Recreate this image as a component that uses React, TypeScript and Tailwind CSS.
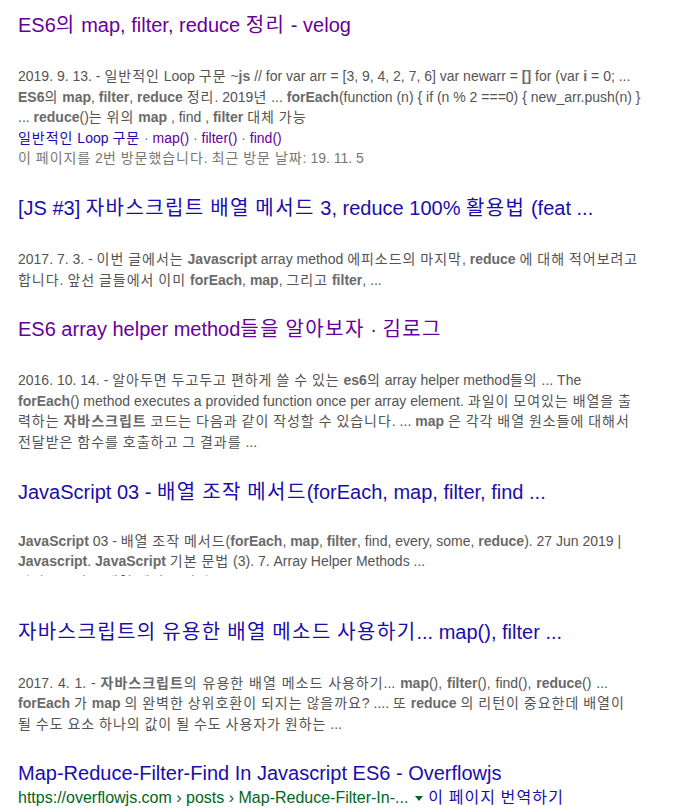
import React from 'react';

const VISITED = 'text-[#660099]';
const LINK = 'text-[#1a0dab]';

// widen hangul runs a bit so Noto CJK gets close to the reference's Korean face
function ko(node: React.ReactNode): React.ReactNode {
  if (typeof node === 'string') {
    const parts = node.split(/([\uac00-\ud7a3]+)/);
    if (parts.length === 1) return node;
    return parts.map((p, i) =>
      i % 2 === 1 ? (
        <span key={i} className="tracking-[0.07em]">
          {p}
        </span>
      ) : (
        p
      ),
    );
  }
  if (Array.isArray(node)) return node.map((n, i) => <React.Fragment key={i}>{ko(n)}</React.Fragment>);
  if (React.isValidElement(node)) {
    const el = node as React.ReactElement<{ children?: React.ReactNode }>;
    if (el.props.children === undefined) return el;
    return React.cloneElement(el, undefined, ko(el.props.children));
  }
  return node;
}

function B({ children }: { children: React.ReactNode }) {
  return <b className="font-bold text-[#6a6a6a]">{children}</b>;
}

function Result({
  title,
  visited,
  lines,
  snippetClass = 'mt-[28px]',
  gapTop,
  children,
}: {
  title: string;
  visited?: boolean;
  lines?: React.ReactNode[];
  snippetClass?: string;
  gapTop: string;
  children?: React.ReactNode;
}) {
  return (
    <div className={gapTop}>
      <h3 className={`text-[20px] leading-[26px] whitespace-nowrap ${visited ? VISITED : LINK}`}>{ko(title)}</h3>
      {lines && (
        <div className={`text-[14px] leading-[20.6px] text-[#545454] ${snippetClass}`}>
          {lines.map((l, i) => (
            <div key={i} className="whitespace-nowrap">
              {ko(l)}
            </div>
          ))}
        </div>
      )}
      {children}
    </div>
  );
}

export default function App() {
  return (
    <div
      className="min-h-[810px] w-[692px] overflow-hidden bg-white px-[18px] pt-[12px]"
      style={{ fontFamily: '"Liberation Sans", Arial, "Noto Sans CJK KR", sans-serif' }}
    >
      <Result
        gapTop=""
        visited
        title="ES6의 map, filter, reduce 정리 - velog"
        lines={[
          <>2019. 9. 13. - 일반적인 Loop 구문 ~<B>js</B> // for var arr = [3, 9, 4, 2, 7, 6] var newarr = <B>[]</B> for (var <B>i</B> = 0; ...</>,
          <><B>ES6</B>의 <B>map</B>, <B>filter</B>, <B>reduce</B> 정리. 2019년 ... <B>forEach</B>(function (n) {'{'} if (n % 2 ===0) {'{'} new_arr.push(n) {'}'}</>,
          <>... <B>reduce</B>()는 위의 <B>map</B> , find , <B>filter</B> 대체 가능</>,
          <span className={LINK}>
            일반적인 Loop 구문<span className="text-[#777]"> · </span>
            <span className={VISITED}>map()</span>
            <span className="text-[#777]"> · </span>
            <span className={VISITED}>filter()</span>
            <span className="text-[#777]"> · </span>
            <span className={VISITED}>find()</span>
          </span>,
          <span className="text-[#777]">이 페이지를 2번 방문했습니다. 최근 방문 날짜: 19. 11. 5</span>,
        ]}
      />

      <Result
        gapTop="mt-[26px]"
        title="[JS #3] 자바스크립트 배열 메서드 3, reduce 100% 활용법 (feat ..."
        lines={[
          <>2017. 7. 3. - 이번 글에서는 <B>Javascript</B> array method 에피소드의 마지막, <B>reduce</B> 에 대해 적어보려고</>,
          <>합니다. 앞선 글들에서 이미 <B>forEach</B>, <B>map</B>, 그리고 <B>filter</B>, ...</>,
        ]}
      />

      <Result
        gapTop="mt-[26px]"
        visited
        title="ES6 array helper method들을 알아보자 · 김로그"
        lines={[
          <>2016. 10. 14. - 알아두면 두고두고 편하게 쓸 수 있는 <B>es6</B>의 array helper method들의 ... The</>,
          <><B>forEach</B>() method executes a provided function once per array element. 과일이 모여있는 배열을 출</>,
          <>력하는 <B>자바스크립트</B> 코드는 다음과 같이 작성할 수 있습니다. ... <B>map</B> 은 각각 배열 원소들에 대해서</>,
          <>전달받은 함수를 호출하고 그 결과를 ...</>,
        ]}
      />

      <Result
        gapTop="mt-[26px]"
        title="JavaScript 03 - 배열 조작 메서드(forEach, map, filter, find ..."
        snippetClass="mt-[26px] h-[45px] overflow-hidden"
        lines={[
          <><B>JavaScript</B> 03 - 배열 조작 메서드(<B>forEach</B>, <B>map</B>, <B>filter</B>, find, every, some, <B>reduce</B>). 27 Jun 2019 |</>,
          <><B>Javascript</B>. <B>JavaScript</B> 기본 문법 (3). 7. Array Helper Methods ...</>,
          <>자바스크립트 배열 메서드 정리</>,
        ]}
      />

      <Result
        gapTop="mt-[43px]"
        title="자바스크립트의 유용한 배열 메소드 사용하기... map(), filter ..."
        lines={[
          <span className="[word-spacing:1px]">2017. 4. 1. - <B>자바스크립트</B>의 유용한 배열 메소드 사용하기... <B>map</B>(), <B>filter</B>(), find(), <B>reduce</B>() ...</span>,
          <><B>forEach</B> 가 <B>map</B> 의 완벽한 상위호환이 되지는 않을까요? .... 또 <B>reduce</B> 의 리턴이 중요한데 배열이</>,
          <>될 수도 요소 하나의 값이 될 수도 사용자가 원하는 ...</>,
        ]}
      />

      <Result gapTop="mt-[26px]" title="Map-Reduce-Filter-Find In Javascript ES6 - Overflowjs">
        <div className="mt-[1px] flex items-center whitespace-nowrap text-[16px] leading-[22px]">
          <span className="text-[#006621]">https://overflowjs.com › posts › Map-Reduce-Filter-In-...</span>
          <span className="ml-[7px] mr-[5px] inline-block h-0 w-0 border-x-[4px] border-t-[5px] border-x-transparent border-t-[#006621]" />
          <span className={LINK}>{ko('이 페이지 번역하기')}</span>
        </div>
      </Result>
    </div>
  );
}
